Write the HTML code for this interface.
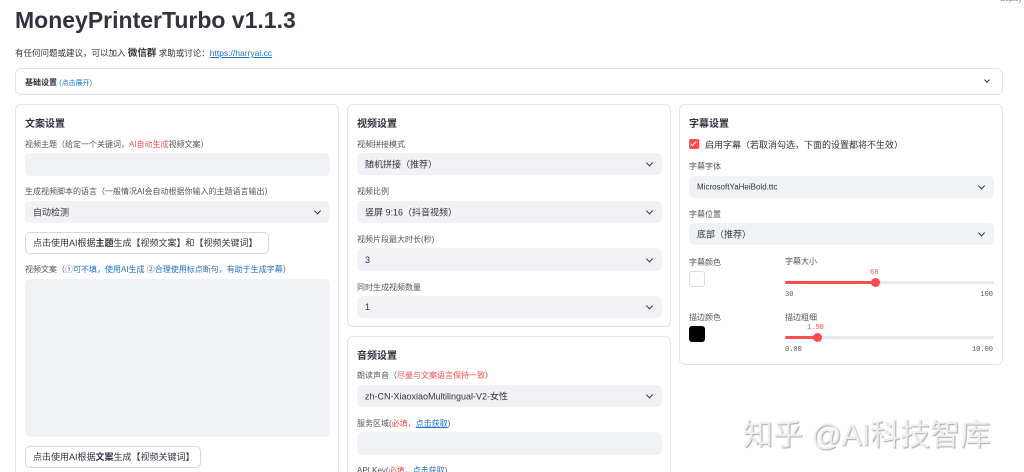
<!DOCTYPE html>
<html><head><meta charset="utf-8"><style>
*{box-sizing:border-box;margin:0;padding:0}
html{width:1024px;height:472px;overflow:hidden}
body{width:1024px;height:472px;overflow:hidden;background:#fff;position:relative;font-family:"Liberation Sans","Noto Sans CJK SC",sans-serif;color:#31333f}
.a{position:absolute;white-space:nowrap}
.card{position:absolute;border:1px solid #e3e4e8;border-radius:6px;background:#fff}
.h{font-size:10px;font-weight:bold;color:#31333f}
.l{font-size:8px;color:#555}
.sel,.inp{position:absolute;background:#f0f2f6;border-radius:5px}
.sel span{position:absolute;left:8px;top:50%;transform:translateY(-50%);font-size:9px;color:#31333f;white-space:nowrap}
.sel:after{content:"";position:absolute;right:10px;top:50%;width:4px;height:4px;border-right:1.3px solid #31333f;border-bottom:1.3px solid #31333f;transform:translateY(-70%) rotate(45deg)}
.btn{position:absolute;border:1px solid #d6d6dc;border-radius:5px;background:#fff;font-size:9px;color:#31333f;padding-left:7px;line-height:20px;white-space:nowrap}
.mono{font-family:"Liberation Mono",monospace;font-size:7px;color:#555}
.r{color:#ff4b4b}.b{color:#1c6fd0}
</style></head><body>
<div class="a" style="right:2px;top:-4px;font-size:7px;color:#777">Deploy</div>
<div class="a" style="left:15px;top:7px;font-size:23px;font-weight:bold;color:#31333f">MoneyPrinterTurbo v1.1.3</div>
<div class="a" style="left:15px;top:45px;font-size:8.5px;color:#31333f">有任何问题或建议，可以加入 <b style="font-size:9.5px">微信群</b> 求助或讨论：<span class="b" style="text-decoration:underline">https://harryai.cc</span></div>
<div class="card" style="left:15px;top:68px;width:988px;height:27px"><div class="a" style="left:9px;top:8px;font-size:8px;font-weight:bold">基础设置 <span class="b" style="font-weight:normal;font-size:7px">(点击展开)</span></div><div class="a" style="right:13px;top:9px;width:4px;height:4px;border-right:1.3px solid #31333f;border-bottom:1.3px solid #31333f;transform:rotate(45deg)"></div></div>

<div class="card" style="left:15px;top:104px;width:324px;height:372px">
<div class="a h" style="left:9px;top:10px">文案设置</div>
<div class="a l" style="left:9px;top:34px">视频主题（给定一个关键词，<span class="r">AI自动生成</span>视频文案）</div>
<div class="inp" style="left:9px;top:48px;width:305px;height:23px"></div>
<div class="a l" style="left:9px;top:81px">生成视频脚本的语言（一般情况AI会自动根据你输入的主题语言输出）</div>
<div class="sel" style="left:9px;top:96px;width:305px;height:22px"><span>自动检测</span></div>
<div class="btn" style="left:9px;top:127px;width:244px;height:22px">点击使用AI根据<b>主题</b>生成【视频文案】和【视频关键词】</div>
<div class="a l" style="left:9px;top:159px">视频文案（<span class="b">①可不填，使用AI生成 ②合理使用标点断句，有助于生成字幕</span>）</div>
<div class="inp" style="left:9px;top:174px;width:305px;height:158px"></div>
<div class="btn" style="left:9px;top:341px;width:176px;height:22px">点击使用AI根据<b>文案</b>生成【视频关键词】</div>
</div>

<div class="card" style="left:347px;top:104px;width:324px;height:223px">
<div class="a h" style="left:9px;top:10px">视频设置</div>
<div class="a l" style="left:9px;top:34px">视频拼接模式</div>
<div class="sel" style="left:9px;top:48px;width:305px;height:22px"><span>随机拼接（推荐）</span></div>
<div class="a l" style="left:9px;top:81px">视频比例</div>
<div class="sel" style="left:9px;top:96px;width:305px;height:22px"><span>竖屏 9:16（抖音视频）</span></div>
<div class="a l" style="left:9px;top:129px">视频片段最大时长(秒)</div>
<div class="sel" style="left:9px;top:143px;width:305px;height:23px"><span>3</span></div>
<div class="a l" style="left:9px;top:177px">同时生成视频数量</div>
<div class="sel" style="left:9px;top:191px;width:305px;height:22px"><span>1</span></div>
</div>

<div class="card" style="left:347px;top:336px;width:324px;height:140px">
<div class="a h" style="left:9px;top:10px">音频设置</div>
<div class="a l" style="left:9px;top:33px">朗读声音（<span class="r">尽量与文案语言保持一致</span>）</div>
<div class="sel" style="left:9px;top:48px;width:305px;height:22px"><span>zh-CN-XiaoxiaoMultilingual-V2-女性</span></div>
<div class="a l" style="left:9px;top:81px">服务区域(<span class="r">必填，</span><span class="b" style="text-decoration:underline">点击获取</span>)</div>
<div class="inp" style="left:9px;top:95px;width:305px;height:23px"></div>
<div class="a l" style="left:9px;top:128px">API Key(<span class="r">必填，</span><span class="b" style="text-decoration:underline">点击获取</span>)</div>
</div>

<div class="card" style="left:679px;top:104px;width:324px;height:261px">
<div class="a h" style="left:9px;top:10px">字幕设置</div>
<div class="a" style="left:9px;top:34px;width:10px;height:10px;background:#ff4b4b;border-radius:2px"><div style="position:absolute;left:3px;top:1px;width:3px;height:6px;border-right:1.5px solid #fff;border-bottom:1.5px solid #fff;transform:rotate(45deg)"></div></div>
<div class="a" style="left:25px;top:33px;font-size:9px">启用字幕（若取消勾选，下面的设置都将不生效）</div>
<div class="a l" style="left:9px;top:56px">字幕字体</div>
<div class="sel" style="left:9px;top:71px;width:305px;height:22px"><span style="font-size:8px">MicrosoftYaHeiBold.ttc</span></div>
<div class="a l" style="left:9px;top:104px">字幕位置</div>
<div class="sel" style="left:9px;top:118px;width:305px;height:22px"><span>底部（推荐）</span></div>
<div class="a l" style="left:9px;top:152px">字幕颜色</div>
<div class="a" style="left:9px;top:166px;width:16px;height:16px;border:1px solid #ddd;border-radius:3px;background:#fff"></div>
<div class="a l" style="left:105px;top:151px">字幕大小</div>
<div class="a mono r" style="left:190px;top:164px">68</div>
<div class="a" style="left:105px;top:176px;width:209px;height:3px;background:#e8e9ee;border-radius:2px"></div>
<div class="a" style="left:105px;top:176px;width:90px;height:3px;background:#ff4b4b;border-radius:2px"></div>
<div class="a" style="left:191px;top:173px;width:9px;height:9px;background:#ff4b4b;border-radius:50%"></div>
<div class="a mono" style="left:105px;top:186px">30</div>
<div class="a mono" style="right:9px;top:186px">100</div>
<div class="a l" style="left:9px;top:207px">描边颜色</div>
<div class="a" style="left:9px;top:221px;width:16px;height:16px;background:#000;border-radius:3px"></div>
<div class="a l" style="left:105px;top:207px">描边粗细</div>
<div class="a mono r" style="left:127px;top:219px">1.50</div>
<div class="a" style="left:105px;top:231px;width:209px;height:3px;background:#e8e9ee;border-radius:2px"></div>
<div class="a" style="left:105px;top:231px;width:32px;height:3px;background:#ff4b4b;border-radius:2px"></div>
<div class="a" style="left:133px;top:228px;width:9px;height:9px;background:#ff4b4b;border-radius:50%"></div>
<div class="a mono" style="left:105px;top:241px">0.00</div>
<div class="a mono" style="right:9px;top:241px">10.00</div>
</div>

<div class="a" style="left:743px;top:410px;font-size:30px;color:#eeeeee;text-shadow:1px 1px 1px #aaa;font-family:'Liberation Sans','Noto Sans CJK SC',sans-serif">知乎 @AI科技智库</div>
</body></html>
